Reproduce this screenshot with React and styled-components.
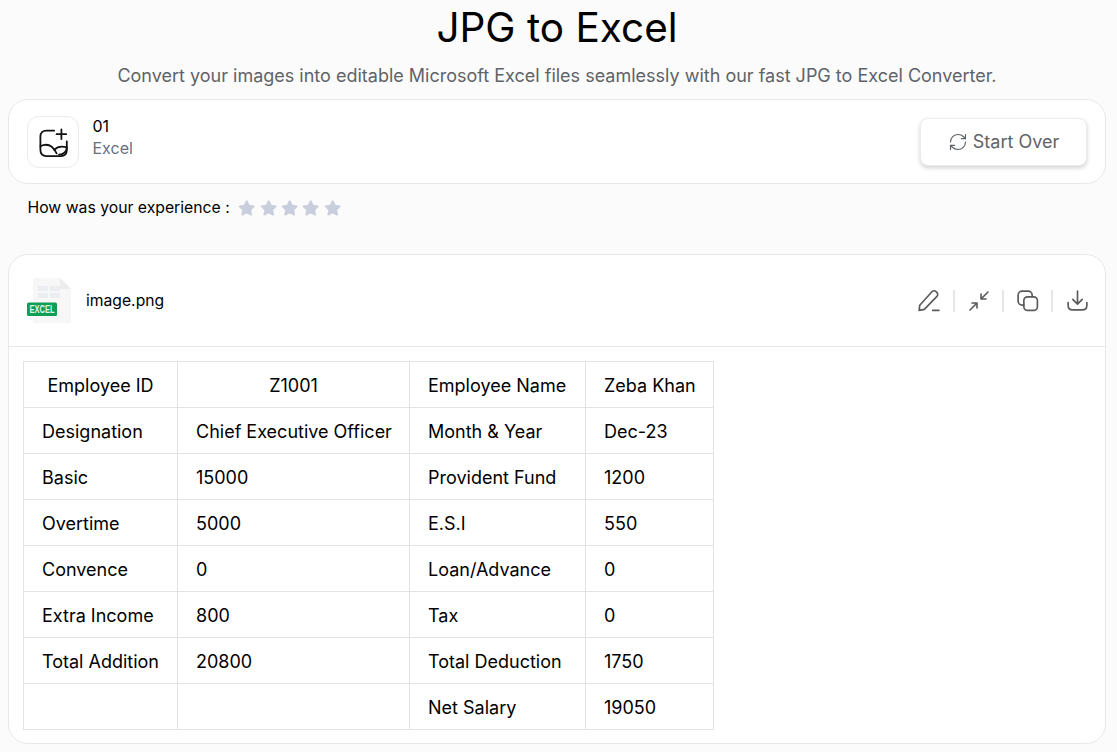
import React from 'react';
import styled, { createGlobalStyle } from 'styled-components';
import { RefreshCw } from 'lucide-react';

const GlobalStyle = createGlobalStyle`
	html, body {
		margin: 0;
		background: #fbfbfb;
		font-family: Inter, "Liberation Sans", sans-serif;
		color: #000;
	}
	body {
		height: 752px;
		overflow: hidden;
	}
`;

const Page = styled.div`
	padding: 0 11px 0 8px;
`;

const Title = styled.h1`
	margin: 0;
	padding-top: 4px;
	height: 48px;
	font-size: 40.5px;
	line-height: 47px;
	font-weight: 400;
	text-align: center;
`;

const Subtitle = styled.p`
	margin: 13px 0 0;
	height: 34px;
	font-size: 18px;
	line-height: 22px;
	color: #5f6368;
	text-align: center;
`;

const Panel = styled.section`
	background: #fff;
	border: 1px solid #e8e8e8;
	border-radius: 20px;
`;

const FileBar = styled(Panel)`
	display: flex;
	align-items: center;
	justify-content: space-between;
	height: 83px;
	padding: 0 18px;
`;

const FileInfo = styled.div`
	display: flex;
	align-items: center;
	gap: 13.5px;
`;

const IconBox = styled.div`
	display: flex;
	align-items: center;
	justify-content: center;
	width: 50px;
	height: 50px;
	border: 1px solid #ebebeb;
	border-radius: 12px;
`;

const FileText = styled.div`
	padding-bottom: 10px;
`;

const Count = styled.div`
	font-size: 16px;
	line-height: 22px;
`;

const FileType = styled.div`
	font-size: 16px;
	line-height: 22px;
	color: #667080;
`;

const StartOver = styled.button`
	display: flex;
	align-items: center;
	justify-content: center;
	gap: 5px;
	width: 167px;
	height: 48px;
	background: #fff;
	border: 1px solid #ececec;
	border-radius: 8px;
	box-shadow: 0 2px 4px rgba(0, 0, 0, 0.18);
	font-family: inherit;
	font-size: 18px;
	color: #5f6368;
`;

const Rating = styled.div`
	display: flex;
	align-items: center;
	gap: 7.5px;
	height: 47px;
	padding: 0 0 1px 19.5px;
	font-size: 15.75px;
`;

const Stars = styled.div`
	display: flex;
	gap: 2px;
`;

const ResultPanel = styled(Panel)`
	margin-top: 22px;
	height: 488px;
`;

const ResultHeader = styled.header`
	display: flex;
	align-items: center;
	justify-content: space-between;
	height: 91px;
	padding: 0 3px 0 18px;
	border-bottom: 1px solid #e8e8e8;
`;

const FileName = styled.div`
	display: flex;
	align-items: center;
	gap: 13px;
	font-size: 15.7px;
`;

const Actions = styled.div`
	display: flex;
	align-items: center;
`;

const ActionButton = styled.span`
	box-sizing: border-box;
	display: flex;
	align-items: center;
	justify-content: center;
	width: ${props => props.width}px;
	height: 22px;
	color: #5a5a5a;
	border-left: ${props => props.first ? 'none' : '2px solid #e6e6e6'};
`;

const TableWrap = styled.div`
	padding: 14px 14px 0;
`;

const Table = styled.table`
	table-layout: fixed;
	width: 690px;
	border-collapse: collapse;
	font-size: 18px;
`;

const Column = styled.col`
	width: ${props => props.width}px;
`;

const Cell = styled.td`
	height: 44px;
	padding: 1px 0 0 18px;
	border: 1px solid #e3e3e3;
	text-align: ${props => props.center ? 'center' : 'left'};
	${props => props.center && 'padding-right: 18px;'}
	white-space: nowrap;
`;

const columns = [154, 232, 176, 128];

const rows = [
	['Employee ID', 'Z1001', 'Employee Name', 'Zeba Khan'],
	['Designation', 'Chief Executive Officer', 'Month & Year', 'Dec-23'],
	['Basic', '15000', 'Provident Fund', '1200'],
	['Overtime', '5000', 'E.S.I', '550'],
	['Convence', '0', 'Loan/Advance', '0'],
	['Extra Income', '800', 'Tax', '0'],
	['Total Addition', '20800', 'Total Deduction', '1750'],
	['', '', 'Net Salary', '19050'],
];

const ImageAddIcon = () => (
	<svg width="36" height="36" viewBox="-1 -1.5 30 30" fill="none" stroke="#111" strokeWidth="1.5" strokeLinecap="round" strokeLinejoin="round">
		<path d="M15 4H8.5C5.5 4 3.5 6 3.5 9v11c0 3.2 2 5.2 5 5.2h12c3 0 5-2 5-5.2v-7" />
		<path d="M21 3v8M17 7h8" />
		<path d="M3.5 17c5-2.500 10-1 13.500 6" />
		<path d="M15 20c2.500-2.500 7-3 10.500-2 0 3-2.500 6-6.500 6" />
	</svg>
);

const Star = () => (
	<svg width="19.4" height="18" viewBox="0 0 24 24" fill="#c9cedd" stroke="#c9cedd" strokeWidth="2.5" strokeLinejoin="round">
		<path d="M12 3l2.900 6 6.500.8-4.800 4.500 1.300 6.500-5.900-3.300-5.900 3.300 1.300-6.500-4.800-4.500 6.500-.8z" />
	</svg>
);

const ExcelIcon = () => (
	<svg width="46" height="48" viewBox="0 0 46 48">
		<path d="M6 3a2 2 0 0 1 2-2h25l11 11v32a2 2 0 0 1-2 2H8a2 2 0 0 1-2-2z" fill="#f7f7f7" />
		<path d="M33 1l11 11h-9a2 2 0 0 1-2-2z" fill="#ececec" />
		<g fill="#ebedf0">
			<rect x="11" y="9" width="10" height="5" />
			<rect x="23" y="9" width="10" height="5" />
			<rect x="11" y="16" width="10" height="5" />
			<rect x="23" y="16" width="10" height="5" />
		</g>
		<rect x="0" y="25.500" width="30" height="13.500" rx="1.500" fill="#0e9f55" />
		<text x="15" y="36" fontFamily="Liberation Sans, sans-serif" fontSize="10" fontWeight="700" fill="#dff3e8" textAnchor="middle" textLength="25" lengthAdjust="spacingAndGlyphs">EXCEL</text>
	</svg>
);

const iconProps = {
	width: 25,
	height: 25,
	viewBox: '0 0 24 24',
	fill: 'none',
	stroke: 'currentColor',
	strokeWidth: 1.6,
	strokeLinecap: 'round',
	strokeLinejoin: 'round',
};

const EditIcon = () => (
	<svg {...iconProps}>
		<path d="M3 21.500l.6-5L14 5l1.500-1.600a2.500 2.500 0 0 1 3.600 0l1 1a2.500 2.500 0 0 1 0 3.600L8 20.500z" />
		<path d="M16 21.500h6" />
	</svg>
);

const CollapseIcon = () => (
	<svg {...iconProps} width="24" height="24">
		<path d="M21 3l-7 7M14 5v5h5" />
		<path d="M3 21l7-7M5 14h5v5" />
	</svg>
);

const CopyIcon = () => (
	<svg {...iconProps}>
		<rect x="8.500" y="8.500" width="13" height="13" rx="3.500" />
		<path d="M8.500 16.500H7A4 4 0 0 1 3 12.500V7a4 4 0 0 1 4-4h5.500a4 4 0 0 1 4 4v1.500" />
	</svg>
);

const DownloadIcon = () => (
	<svg {...iconProps}>
		<path d="M12 3v12M7.500 11l4.500 4.500 4.500-4.500" />
		<path d="M3 14v2.500C3 19.500 5 21 7.500 21h9c2.500 0 4.500-1.500 4.500-4.500V14" />
	</svg>
);

export default function App() {
	return (
		<Page>
			<GlobalStyle />
			<Title>JPG to Excel</Title>
			<Subtitle>Convert your images into editable Microsoft Excel files seamlessly with our fast JPG to Excel Converter.</Subtitle>
			<FileBar>
				<FileInfo>
					<IconBox><ImageAddIcon /></IconBox>
					<FileText>
						<Count>01</Count>
						<FileType>Excel</FileType>
					</FileText>
				</FileInfo>
				<StartOver><RefreshCw size={20} strokeWidth={1.4} />Start Over</StartOver>
			</FileBar>
			<Rating>
				How was your experience :
				<Stars>{[0, 1, 2, 3, 4].map(i => <Star key={i} />)}</Stars>
			</Rating>
			<ResultPanel>
				<ResultHeader>
					<FileName><ExcelIcon />image.png</FileName>
					<Actions>
						<ActionButton first width={49}><EditIcon /></ActionButton>
						<ActionButton width={49}><CollapseIcon /></ActionButton>
						<ActionButton width={49}><CopyIcon /></ActionButton>
						<ActionButton width={51}><DownloadIcon /></ActionButton>
					</Actions>
				</ResultHeader>
				<TableWrap>
					<Table>
						<colgroup>
							{ columns.map((width, i) => <Column key={i} width={width} />) }
						</colgroup>
						<tbody>
							{ rows.map((row, i) => (
								<tr key={i}>
									{ row.map((text, j) => (
										<Cell key={j} center={i === 0 && j < 2}>{text}</Cell>
									))}
								</tr>
							))}
						</tbody>
					</Table>
				</TableWrap>
			</ResultPanel>
		</Page>
	);
}
